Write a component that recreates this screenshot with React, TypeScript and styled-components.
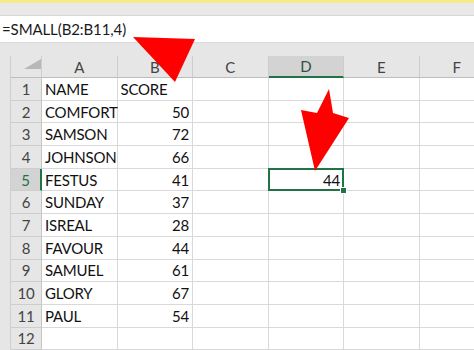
import React from "react";
import styled, { createGlobalStyle, css } from "styled-components";

const names = ["COMFORT", "SAMSON", "JOHNSON", "FESTUS", "SUNDAY", "ISREAL", "FAVOUR", "SAMUEL", "GLORY", "PAUL"];
const scores = [50, 72, 66, 41, 37, 28, 44, 61, 67, 54];
const cols = ["A", "B", "C", "D", "E", "F"];

export default function App() {
  const rows: React.ReactNode[] = [];
  for (let r = 1; r <= 12; r++) {
    let a = "";
    let b = "";
    if (r === 1) {
      a = "NAME";
      b = "SCORE";
    } else if (r <= 11) {
      a = names[r - 2];
      b = String(scores[r - 2]);
    }
    rows.push(
      <React.Fragment key={r}>
        <RowHead $active={r === 5}>{r}</RowHead>
        <Cell>{a}</Cell>
        <Cell $num={r > 1}>{b}</Cell>
        <Cell />
        <Cell $num $selected={r === 5}>{r === 5 ? "44" : ""}</Cell>
        <Cell />
        <Cell />
      </React.Fragment>
    );
  }

  return (
    <Page>
      <GlobalStyle />
      <TopStrip />
      <Ribbon />
      <FormulaBar>=SMALL(B2:B11,4)</FormulaBar>
      <Sheet>
        <Grid>
          <Corner>
            <svg width="42" height="22" viewBox="0 0 42 22">
              <polygon points="23,13 40,3 40,13" fill="#b7b7b7" />
            </svg>
          </Corner>
          {cols.map((c) => (
            <ColHead key={c} $active={c === "D"}>
              {c}
            </ColHead>
          ))}
          {rows}
        </Grid>
      </Sheet>
      <Arrows width="474" height="350" viewBox="0 0 474 350">
        <polygon points="133,37 195,39 175,82" fill="#f00" />
        <polygon points="329,89 333,113 349,118 315,171 301,110 317,113" fill="#f00" />
      </Arrows>
    </Page>
  );
}

const GlobalStyle = createGlobalStyle`
  body {
    margin: 0;
    overflow: hidden;
    background: #fff;
    font-family: Lato, "Liberation Sans", sans-serif;
  }
`;

const Page = styled.div`
  position: relative;
  width: 474px;
  height: 350px;
  overflow: hidden;
`;

const TopStrip = styled.div`
  height: 3px;
  background: #f4ec8c;
`;

const Ribbon = styled.div`
  height: 12px;
  background: #e9e9e9;
  border-bottom: 1px solid #d6d6d6;
`;

const FormulaBar = styled.div`
  height: 26px;
  padding-left: 2px;
  display: flex;
  align-items: center;
  font-size: 15px;
  letter-spacing: -0.1px;
  color: #1a1a1a;
  background: #fff;
`;

const Sheet = styled.div`
  background: #e6e6e6;
  padding-top: 13px;
  border-top: 1px solid #dcdcdc;
`;

const Grid = styled.div`
  display: grid;
  grid-template-columns: 42px repeat(6, 75.5px);
  grid-template-rows: 22px;
  grid-auto-rows: 22.7px;
  font-size: 15px;
  letter-spacing: -0.2px;
  color: #111;
`;

const Corner = styled.div`
  border-left: 1px solid #cfcfcf;
  margin-left: 10px;
  border-bottom: 1px solid #bdbdbd;
  border-right: 1px solid #cfcfcf;
  overflow: hidden;
  svg {
    margin-left: -10px;
  }
`;

const ColHead = styled.div<{ $active?: boolean }>`
  display: flex;
  align-items: center;
  justify-content: center;
  color: #444;
  border-right: 1px solid #cdcdcd;
  border-bottom: 1px solid #bdbdbd;
  ${(p) =>
    p.$active &&
    css`
      background: #d3d3d3;
      color: #2f4f3f;
      border-bottom: 2px solid #217346;
    `}
`;

const RowHead = styled.div<{ $active?: boolean }>`
  display: flex;
  align-items: center;
  justify-content: center;
  margin-left: 10px;
  border-left: 1px solid #cfcfcf;
  border-right: 1px solid #c6c6c6;
  border-bottom: 1px solid #cdcdcd;
  color: #444;
  background: #e6e6e6;
  ${(p) =>
    p.$active &&
    css`
      background: #d3d3d3;
      color: #217346;
      border-right: 2px solid #217346;
    `}
`;

const Cell = styled.div<{ $num?: boolean; $selected?: boolean }>`
  position: relative;
  display: flex;
  align-items: center;
  justify-content: ${(p) => (p.$num ? "flex-end" : "flex-start")};
  padding: 0 3px;
  background: #fff;
  border-right: 1px solid #d9d9d9;
  border-bottom: 1px solid #d9d9d9;
  white-space: nowrap;
  ${(p) =>
    p.$selected &&
    css`
      &::after {
        content: "";
        position: absolute;
        left: -1px;
        top: -1px;
        right: -1px;
        bottom: -1px;
        border: 2px solid #217346;
      }
      &::before {
        content: "";
        position: absolute;
        right: -4px;
        bottom: -4px;
        width: 5px;
        height: 5px;
        background: #217346;
        border: 1px solid #fff;
        z-index: 1;
      }
    `}
`;

const Arrows = styled.svg`
  position: absolute;
  left: 0;
  top: 0;
  pointer-events: none;
`;
